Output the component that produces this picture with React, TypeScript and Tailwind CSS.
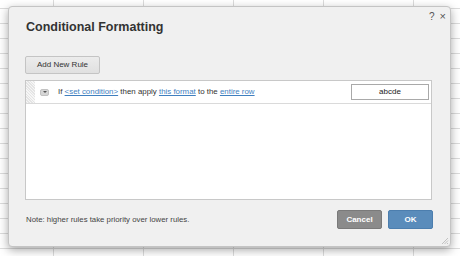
import React from "react";

export default function App() {
  return (
    <div
      className="relative w-[460px] h-[256px] overflow-hidden bg-white bg-[linear-gradient(to_right,#dcdcdc_1px,transparent_1px),linear-gradient(to_bottom,#dcdcdc_1px,transparent_1px)] bg-[size:90px_15px] bg-[position:53px_8px]"
      style={{ fontFamily: '"Liberation Sans", Arial, sans-serif' }}
    >
      <div className="absolute left-[8px] top-[6px] w-[443px] h-[241px] bg-[#f0f0f0] border border-[#c4c4c4] rounded-[4px] shadow-[0_3px_10px_rgba(0,0,0,0.35)] flex flex-col px-[16px]">
        <div className="absolute right-[4px] top-[4px] flex items-center gap-[5px] text-[#555] text-[10px] leading-none">
          <span>?</span>
          <span className="text-[11px]">×</span>
        </div>

        <div className="mt-[13px] pl-[1px] text-[12.5px] leading-[15px] font-bold text-[#333]">
          Conditional Formatting
        </div>

        <button className="mt-[21px] w-[75px] h-[18px] rounded-[2px] border border-[#c4c4c4] bg-[linear-gradient(#ececec,#e0e0e0)] text-[8px] text-[#333] flex items-center justify-center">
          Add New Rule
        </button>

        <div className="mt-[6px] w-[407px] h-[120px] bg-white border border-[#c8c8c8] flex flex-col">
          <div className="h-[23px] flex items-center border-b border-[#dadada]">
            <div className="w-[9px] h-full bg-[repeating-linear-gradient(45deg,#e4e4e4_0px,#e4e4e4_1px,#f6f6f6_1px,#f6f6f6_2px)]" />
            <div className="ml-[5px] w-[9px] h-[7px] rounded-[2px] bg-[#d6d6d6] border border-[#c2c2c2] flex items-center justify-center">
              <div className="w-0 h-0 border-l-[2px] border-r-[2px] border-t-[2px] border-l-transparent border-r-transparent border-t-[#555]" />
            </div>
            <div className="ml-[9px] text-[7.9px] text-[#333] whitespace-nowrap">
              If{" "}
              <span className="text-[#3f7fbf] underline">&lt;set condition&gt;</span>{" "}
              then apply <span className="text-[#3f7fbf] underline">this format</span> to the{" "}
              <span className="text-[#3f7fbf] underline">entire row</span>
            </div>
            <div className="ml-auto mr-[2px] w-[78px] h-[16px] border border-[#a9a9a9] bg-white flex items-center justify-center text-[8px] text-[#222]">
              abcde
            </div>
          </div>
        </div>

        <div className="mt-[10px] flex items-center">
          <div className="pl-[1px] text-[7.8px] text-[#444]">Note: higher rules take priority over lower rules.</div>
          <div className="ml-auto flex gap-[6px] mr-[1px]">
            <button className="w-[45px] h-[19px] rounded-[2px] bg-[#8b8b8b] border border-[#7a7a7a] text-white font-bold text-[8px] flex items-center justify-center">
              Cancel
            </button>
            <button className="w-[45px] h-[19px] rounded-[2px] bg-[#5a8cbb] border border-[#4c7eae] text-white font-bold text-[8px] flex items-center justify-center">
              OK
            </button>
          </div>
        </div>

        <svg className="absolute right-[1px] bottom-[1px]" width="8" height="8" viewBox="0 0 8 8">
          <path d="M7 1 L1 7 M7 3.5 L3.5 7 M7 6 L6 7" stroke="#b5b5b5" strokeWidth="0.8" />
        </svg>
      </div>
    </div>
  );
}
